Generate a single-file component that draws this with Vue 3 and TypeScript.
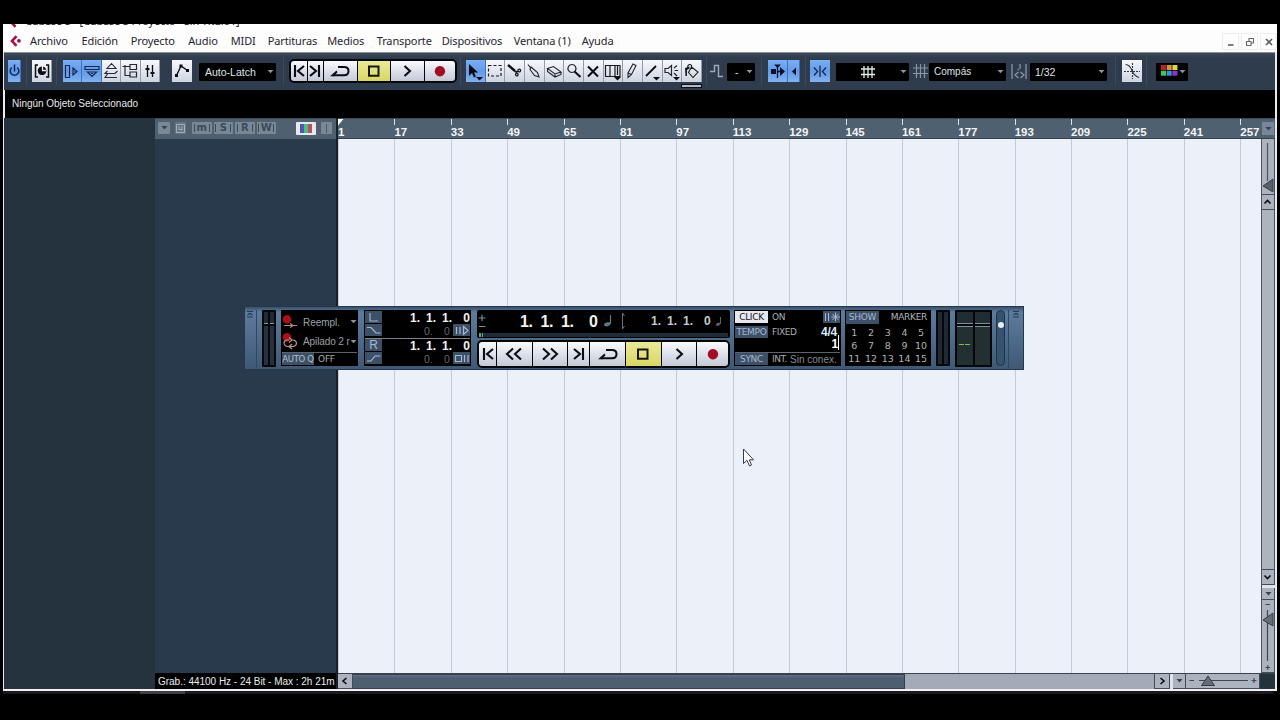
<script setup lang="ts">
import { h } from 'vue'
import type { FunctionalComponent } from 'vue'

interface Shape { d: string; s?: string; f?: string; w?: number; dash?: string }
interface Glyph { w: number; h: number; p: Shape[] }

const K = '#0b0d12'
const glyphs: Record<string, Glyph> = {
  logo: { w: 14, h: 14, p: [{ d: 'M7.500 2.200L3 7L7.500 11.800', s: '#a3153f', w: 2.6 }, { d: 'M10 5a1.900 1.900 0 1 1 -.1 0Z', f: '#a3153f' }] },
  power: { w: 13, h: 22, p: [{ d: 'M4 7.500A4.300 4.300 0 1 0 9 7.500M6.500 4.500V11.500', s: '#0d2b5a', w: 1.5 }] },
  clock: { w: 20, h: 22, p: [{ d: 'M6 5H3.500V17H6M14 5H16.500V17H14', s: K, w: 1.5 }, { d: 'M10 6.500a4.300 4.300 0 1 0 .1 0Z', f: K }, { d: 'M10.500 6V10.500H14', s: '#e8ebf3', w: 1.3 }] },
  inspector: { w: 20, h: 22, p: [{ d: 'M3.500 5.500H7.500V17.500H3.500ZM11 8L15 11.500L11 15ZM12.500 11.500H13.500', s: '#14294d', w: 1.2 }] },
  infoline: { w: 20, h: 22, p: [{ d: 'M3 6.500H17V9.500H3ZM5.500 12H14.500L10 16.500ZM9 13.500H11', s: '#14294d', w: 1.2 }] },
  overview: { w: 20, h: 22, p: [{ d: 'M10.500 3.500L6 8.500H15ZM6.500 11L4 13.500H14L16.500 11M6.500 14L4 17.500H16', s: '#262930', w: 1.1 }] },
  tree: { w: 20, h: 22, p: [{ d: 'M2.500 6.500H8M5 5V15.500H10M8 6.500H10M10 4.500H16.500V9.500H10ZM10 12H16.500V17H10Z', s: '#262930', w: 1.2 }] },
  mixer: { w: 20, h: 22, p: [{ d: 'M7.500 5V17M12.500 5V17', s: K, w: 1.3 }, { d: 'M5.500 8H9.500V10H5.500ZM10.500 12H14.500V14H10.500Z', f: K }] },
  automation: { w: 20, h: 22, p: [{ d: 'M4.500 15.500L9 6L15.500 10.500', s: K, w: 1.4 }, { d: 'M3 14H6V17H3ZM7.500 4.500H10.500V7.500H7.500ZM14 9H17V12H14Z', f: K }] },
  toStart: { w: 16, h: 22, p: [{ d: 'M4 5V17M13 6L7 11L13 16', s: K, w: 2.1 }] },
  toEnd: { w: 16, h: 22, p: [{ d: 'M12 5V17M3 6L9 11L3 16', s: K, w: 2.1 }] },
  rewind: { w: 22, h: 18, p: [{ d: 'M10 3.500L4 9L10 14.500M18 3.500L12 9L18 14.500', s: K, w: 2.1 }] },
  forward: { w: 22, h: 18, p: [{ d: 'M4 3.500L10 9L4 14.500M12 3.500L18 9L12 14.500', s: K, w: 2.1 }] },
  cycle: { w: 22, h: 16, p: [{ d: 'M9 4H15Q19.500 4 19.500 8Q19.500 12.300 15 12.300H4', s: K, w: 2 }, { d: 'M1 13.300L7.500 7.500L8.500 9.200L5.500 12.500V13.300Z', f: K }] },
  stop: { w: 16, h: 16, p: [{ d: 'M3 3.500H12.500V12.800H3Z', s: '#17180b', w: 2 }] },
  play: { w: 16, h: 16, p: [{ d: 'M5.500 3L11 8L5.500 13', s: K, w: 2.1 }] },
  record: { w: 16, h: 16, p: [{ d: 'M8 3a5.200 5.200 0 1 1 -.1 0Z', f: '#a20d25' }] },
  arrow: { w: 20, h: 22, p: [{ d: 'M4 4V16L7 13L9 17.500L11 16.500L9 12.500H13Z', f: K }, { d: 'M11 17H18L14.500 20.500Z', f: K }] },
  range: { w: 20, h: 22, p: [{ d: 'M3.500 5.500H16V16H3.500Z', s: '#17191e', w: 1.2, dash: '3 2' }] },
  split: { w: 20, h: 22, p: [{ d: 'M3 5L10 11', s: K, w: 2.4 }, { d: 'M9.500 11.500H13M10.500 11L11.500 13M13 10.500a1.300 1.300 0 1 0 2.600 0a1.300 1.300 0 1 0 -2.600 0M10.500 14.500a1.300 1.300 0 1 0 2.600 0a1.300 1.300 0 1 0 -2.600 0', s: '#17191e', w: 1.3 }] },
  glue: { w: 20, h: 22, p: [{ d: 'M4 4.500L7 8.500M7 7L13.500 12.500L15 17L10.500 15.500L6 9.500Z', s: '#22252c', w: 1.1 }] },
  erase: { w: 20, h: 22, p: [{ d: 'M3.500 8.500L9.500 6.500L17 12L11 14ZM3.500 8.500V11.500L11 17L17 14.500V12M11 14V17', s: '#22252c', w: 1.1 }] },
  zoom: { w: 20, h: 22, p: [{ d: 'M8 4.500a4 4 0 1 1 -.1 0Z', s: '#22252c', w: 1.2 }, { d: 'M10.500 11.500L16.500 17', s: K, w: 2 }] },
  mute: { w: 20, h: 22, p: [{ d: 'M5 6.500L15 16.500M15 6.500L5 16.500', s: K, w: 2.1 }] },
  warp: { w: 20, h: 22, p: [{ d: 'M2.500 5.500H17V16.500H2.500ZM7 5.500V16.500M12 5.500V16.500M14.500 5.500V15', s: '#17191e', w: 1.2 }, { d: 'M11 17H18L14.500 20.500Z', f: K }] },
  draw: { w: 20, h: 22, p: [{ d: 'M10 4L13 5.500L8.500 14.500L5 17.500L5 13ZM5 13L8.500 14.500', s: '#22252c', w: 1.1 }] },
  line: { w: 20, h: 22, p: [{ d: 'M4 16L14 6', s: K, w: 1.8 }, { d: 'M11 17H18L14.500 20.500Z', f: K }] },
  speaker: { w: 20, h: 22, p: [{ d: 'M3 8.500H6L9.500 5.500V15.500L6 12.500H3ZM12 8L15 5.500M12.500 10.500H16M12 13L15 16', s: '#22252c', w: 1.2 }, { d: 'M11 17H18L14.500 20.500Z', f: K }] },
  bucket: { w: 20, h: 22, p: [{ d: 'M9.500 7L16 12L11 17.500L6.500 12.500ZM9.500 9V5.500Q8 3.500 6 5.500L5.500 8', s: '#17191e', w: 1.1 }, { d: 'M3 8L7.500 6.500V8.500L5 10V16H3.500Z', f: '#17191e' }] },
  pulse: { w: 14, h: 16, p: [{ d: 'M0 8.500H4.500V2.500H8.500V13.500H13', s: '#9caabb', w: 1.4 }] },
  scroll: { w: 19, h: 22, p: [{ d: 'M3 9H8V14H3ZM12 7L17 11.500L12 16ZM6 4.500H13L9.500 8Z', f: '#07122a' }, { d: 'M9.500 5V18M9 11.500H14', s: '#07122a', w: 1.3 }] },
  tinyLeft: { w: 11, h: 22, p: [{ d: 'M8 7.500V15.500L4 11.500Z', f: '#07122a' }] },
  snap: { w: 20, h: 22, p: [{ d: 'M10 5.500V17M4 7.500L7.500 11.500L4 15.500M16 7.500L12.500 11.500L16 15.500', s: '#14294d', w: 1.3 }] },
  grid: { w: 14, h: 14, p: [{ d: 'M3 1V13M7 1V13M11 1V13M0 4H14M0 9.500H14', s: '#dfe9e8', w: 1.3 }] },
  gridDim: { w: 15, h: 16, p: [{ d: 'M3.500 1V15M7.500 1V15M11.500 1V15M0 5H15M0 10.500H15', s: '#8796a5', w: 1.2 }] },
  quant: { w: 16, h: 17, p: [{ d: 'M1 1V16M15 1V16M9 1V6M8 6.500H6.500M7.500 9L4 12L7.500 15M9.500 9L13 12L9.500 15', s: '#8796a5', w: 1.3 }] },
  cross: { w: 20, h: 22, p: [{ d: 'M3.500 4.500Q8 5 10 10.500T17 17.500', s: '#333740', w: 1.2 }, { d: 'M10.500 3V19M2 11.500H18', s: '#333740', w: 1.1, dash: '2 1' }] },
  caret: { w: 7, h: 4, p: [{ d: 'M.5 0H6.500L3.500 3.300Z', f: '#8d939b' }] },
  minimize: { w: 16, h: 16, p: [{ d: 'M5 11H10.500', s: '#66666c', w: 1.7 }] },
  restore: { w: 16, h: 16, p: [{ d: 'M4.500 7.500H9V11.500H4.500ZM7 7V4.500H11.500V9H9.500', s: '#66666c', w: 1.1 }] },
  close: { w: 16, h: 16, p: [{ d: 'M5 5L11 11M11 5L5 11', s: '#5c5c62', w: 1.7 }] },
  chevL: { w: 14, h: 14, p: [{ d: 'M8.500 4L5 7L8.500 10', s: K, w: 1.6 }] },
  chevR: { w: 14, h: 14, p: [{ d: 'M5.500 4L9 7L5.500 10', s: K, w: 1.6 }] },
  chevU: { w: 14, h: 14, p: [{ d: 'M3.500 8.500L6.500 5.500L9.500 8.500', s: K, w: 1.6 }] },
  chevD: { w: 14, h: 14, p: [{ d: 'M3.500 5.500L6.500 8.500L9.500 5.500', s: K, w: 1.6 }] },
  caretDark: { w: 7, h: 4, p: [{ d: 'M.5 0H6.500L3.500 3.500Z', f: '#38414d' }] },
  topSlider: { w: 14, h: 55, p: [{ d: 'M6.500 4V42', s: '#4c5663', w: 1.2 }, { d: 'M12 40V53L2 47Z', f: '#59606a', s: '#363d47', w: 1 }] },
  vSlider: { w: 14, h: 73, p: [{ d: 'M4.500 4.500H9M6.500 10V61M4.500 67.500H9M6.750 65.200V69.800', s: '#3f4752', w: 1.2 }, { d: 'M12 13V26L2 20Z', f: '#666d77', s: '#363d47', w: 1 }] },
  hSlider: { w: 74, h: 14, p: [{ d: 'M3.500 6.500H8M13 6.500H62M65.500 6.500H70.500M68 4V9', s: '#3f4752', w: 1.2 }, { d: 'M15.500 11.500L22 2L28.500 11.500Z', f: '#666d77', s: '#363d47', w: 1 }] },
  box: { w: 11, h: 11, p: [{ d: 'M1.500 1.500H9.500V9.500H1.500ZM4 3.500V6.500H7M7 3.500V7.500', s: '#a3b0bc', w: 1 }] },
  grip: { w: 8, h: 8, p: [{ d: 'M1 1.500H7M1.500 5L4 3.500L6.500 5M1 7H7', s: '#233a52', w: 1.2 }] },
  recA: { w: 18, h: 16, p: [{ d: 'M5 1a4.300 4.300 0 1 1 -.1 0Z', f: '#a80f1c' }, { d: 'M2 11.500H15M8 9.500L11 11.500L8 13.500', s: '#b78684', w: 1.2 }] },
  recB: { w: 18, h: 18, p: [{ d: 'M5 0a4.300 4.300 0 1 1 -.1 0Z', f: '#a80f1c' }, { d: 'M7 7H5Q2 7.500 2 10Q2.500 13.500 5.500 13.500H11Q14.500 13 14.500 10Q14 7 11 7H9M7 4.500L10 7L7 9.500M10 11L7 13.500L10 16', s: '#c99090', w: 1.2 }] },
  locL: { w: 17, h: 12, p: [{ d: 'M5 2V10H13', s: '#9bb1cd', w: 1.2 }] },
  punchIn: { w: 17, h: 12, p: [{ d: 'M2 3.500H6L11 9H15.500', s: '#a6bad3', w: 1.2 }] },
  punchOut: { w: 17, h: 12, p: [{ d: 'M2 9H6L10 4H15.500', s: '#a6bad3', w: 1.2 }] },
  preroll: { w: 18, h: 12, p: [{ d: 'M3.500 3V10M7 3V10M10.500 2.500L15 6.500L10.500 10.500Z', s: '#a6bad3', w: 1.2 }] },
  postroll: { w: 18, h: 12, p: [{ d: 'M2.500 3.500H8.500V9.500H2.500ZM11.500 3V10M15 3V10', s: '#a6bad3', w: 1.2 }] },
  plusMinus: { w: 10, h: 15, p: [{ d: 'M5 1V7M1.500 4H8.500M2 12.500H8.500', s: '#76919a', w: 1.2 }] },
  note: { w: 9, h: 12, p: [{ d: 'M7.500 0V9', s: '#617b80', w: 1.2 }, { d: 'M1 9Q3 6.500 7.500 7.500V9Q6 11.500 3 11.500Q1 11.500 1 9Z', f: '#617b80' }] },
  noteS: { w: 7, h: 9, p: [{ d: 'M5.500 0V7', s: '#5a6770', w: 1 }, { d: 'M1 7Q2.500 5 5.500 6V7Q4 9 2 9Q1 9 1 7Z', f: '#5a6770' }] },
  swap: { w: 4, h: 18, p: [{ d: 'M1.500 1V17M1.500 1L3.500 4M3.500 14L1.500 17', s: '#697079', w: 1 }] },
  countIn: { w: 18, h: 12, p: [{ d: 'M2.500 2V10M5.500 2V10M12.500 1.500V10.500M8.500 6H17M9.500 3L15.500 9M15.500 3L9.500 9', s: '#a6bad3', w: 1 }] },
  marker: { w: 6, h: 7, p: [{ d: 'M0 0H5.500L0 6.500Z', f: '#fff' }] },
  pointer: { w: 13, h: 20, p: [{ d: 'M1.500 1V15.500L5 12.300L7.500 18L9.500 17L7.300 11.800H11.500Z', f: '#fff', s: '#3a3b42', w: 1 }] },
}

const Icon: FunctionalComponent<{ n: string }> = (props) => {
  const g = glyphs[props.n]
  return h('svg', { width: g.w, height: g.h, viewBox: `0 0 ${g.w} ${g.h}`, class: 'ic' },
    g.p.map((s) => h('path', { d: s.d, fill: s.f ?? 'none', stroke: s.s ?? 'none', 'stroke-width': s.w ?? 1, 'stroke-dasharray': s.dash })))
}
Icon.props = ['n']

const menus = ['Archivo', 'Edición', 'Proyecto', 'Audio', 'MIDI', 'Partituras', 'Medios', 'Transporte', 'Dispositivos', 'Ventana (1)', 'Ayuda']
const views = ['inspector', 'infoline', 'overview', 'tree', 'mixer']
const tools = ['arrow', 'range', 'split', 'glue', 'erase', 'zoom', 'mute', 'warp', 'draw', 'line', 'speaker', 'bucket']
const miniTransport = ['toStart', 'toEnd', 'cycle', 'stop', 'play', 'record']
const transport = ['toStart', 'rewind', 'forward', 'toEnd', 'cycle', 'stop', 'play', 'record']
const bars = Array.from({ length: 17 }, (_, i) => i * 16 + 1)
const swatches = ['#b92228', '#d8953a', '#ddd64a', '#3fc45f', '#3293d6', '#9134c4']
const monitors = ['m', 'S', 'R', 'W']
</script>

<template>
  <div class="screen">
    <div class="window">
      <div class="title"><Icon n="logo" /><span>Cubase 5 - [Cubase 5 Proyecto - Sin Título1]</span></div>
      <div class="menubar">
        <Icon n="logo" class="logo" />
        <div class="menus"><span v-for="m in menus" :key="m">{{ m }}</span></div>
        <div class="winbtns"><i><Icon n="minimize" /></i><i><Icon n="restore" /></i><i><Icon n="close" /></i></div>
      </div>

      <div class="toolbar">
        <b class="btn on power"><Icon n="power" /></b>
        <u class="sep s1"></u>
        <b class="btn clock"><Icon n="clock" /></b>
        <u class="sep s2"></u>
        <div class="group views"><b v-for="(v, i) in views" :key="v" class="btn" :class="{ on: i < 2 }"><Icon :n="v" /></b></div>
        <b class="btn auto"><Icon n="automation" /></b>
        <div class="drop latch"><span>Auto-Latch</span><Icon n="caret" /></div>
        <u class="sep s3"></u>
        <div class="mini"><b v-for="m in miniTransport" :key="m" :class="m"><Icon :n="m" /></b></div>
        <u class="sep s4"></u>
        <div class="toolwrap">
          <div class="group tools"><b v-for="(t, i) in tools" :key="t" class="btn" :class="{ on: i === 0 }"><Icon :n="t" /></b></div>
          <div class="colorbar"></div>
        </div>
        <u class="sep s5"></u>
        <Icon n="pulse" class="pulse" />
        <div class="drop nudge"><span>-</span><Icon n="caret" /></div>
        <u class="sep s6"></u>
        <div class="group follow"><b class="btn on"><Icon n="scroll" /></b><b class="btn on"><Icon n="tinyLeft" /></b></div>
        <u class="sep s7"></u>
        <b class="btn on snap"><Icon n="snap" /></b>
        <div class="drop gridtype"><Icon n="grid" /><Icon n="caret" /></div>
        <Icon n="gridDim" class="gdim" />
        <div class="drop compas"><span>Compás</span><Icon n="caret" /></div>
        <Icon n="quant" class="quant" />
        <div class="drop qval"><span>1/32</span><Icon n="caret" /></div>
        <u class="sep s8"></u>
        <b class="btn crossbtn"><Icon n="cross" /></b>
        <u class="sep s9"></u>
        <div class="drop colors"><div class="sw"><svg width="17" height="11" viewBox="0 0 17 11"><rect v-for="(c, i) in swatches" :key="c" :x="(i % 3) * 5.700" :y="i < 3 ? 0 : 5.700" width="5" height="5" :fill="c" /></svg></div><Icon n="caret" /></div>
      </div>

      <div class="info">Ningún Objeto Seleccionado</div>

      <div class="project">
        <div class="inspector"></div>
        <div class="tracks">
          <div class="trackhead">
            <i class="tb dd"><Icon n="caretDark" /></i>
            <i class="tb bx"><Icon n="box" /></i>
            <i v-for="m in monitors" :key="m" class="tb mon"><span>{{ m }}</span></i>
            <i class="tb rgb"><em></em><em></em><em></em></i>
            <i class="tb bar"><em></em></i>
          </div>
          <div class="tracklist"></div>
          <div class="status">Grab.: 44100 Hz - 24 Bit - Max : 2h 21m</div>
        </div>
        <div class="arrange">
          <div class="ruler">
            <div class="ticks"><span v-for="b in bars" :key="b">{{ b }}</span></div>
            <Icon n="marker" class="marker" />
            <i class="rulerbtn"><Icon n="caretDark" /></i>
          </div>
          <div class="middle">
            <div class="canvas"><i v-for="b in bars" :key="b"></i></div>
            <div class="vscroll">
              <div class="cell topz"><Icon n="topSlider" /></div>
              <div class="cell"><Icon n="chevU" /></div>
              <div class="vtrack"></div>
              <div class="cell"><Icon n="chevD" /></div>
              <div class="gap"></div>
              <div class="cell small"><Icon n="caretDark" /></div>
              <div class="cell botz"><Icon n="vSlider" /></div>
            </div>
          </div>
          <div class="hscroll">
            <div class="cell"><Icon n="chevL" /></div>
            <div class="thumb"></div>
            <div class="htrack"></div>
            <div class="cell"><Icon n="chevR" /></div>
            <div class="gap"></div>
            <div class="cell small"><Icon n="caretDark" /></div>
            <div class="cell hz"><Icon n="hSlider" /></div>
            <div class="corner"></div>
          </div>
        </div>
      </div>
    </div>
    <div class="below"><i></i></div>

    <div class="panel">
      <div class="cap"><Icon n="grip" /></div>
      <div class="meter thin cross1"><i></i><i></i></div>
      <div class="modes">
        <div class="mode m1"><Icon n="recA" /><span>Reempl.</span><Icon n="caret" /></div>
        <div class="mode m2"><Icon n="recB" /><span>Apilado 2 r</span><Icon n="caret" /></div>
        <div class="autoq"><b>AUTO Q</b><span>OFF</span></div>
      </div>
      <div class="locs">
        <div class="lrow"><i class="key"><Icon n="locL" /></i><div class="num"><span>1.</span><span>1.</span><span>1.</span><span>0</span></div></div>
        <div class="lrow dim"><i class="key"><Icon n="punchIn" /></i><div class="num2"><span>0.</span><span>0</span></div><i class="key"><Icon n="preroll" /></i></div>
        <div class="rule"></div>
        <div class="lrow"><i class="key r">R</i><div class="num"><span>1.</span><span>1.</span><span>1.</span><span>0</span></div></div>
        <div class="lrow dim"><i class="key"><Icon n="punchOut" /></i><div class="num2"><span>0.</span><span>0</span></div><i class="key"><Icon n="postroll" /></i></div>
      </div>
      <div class="main">
        <div class="display">
          <div class="pos">
            <Icon n="plusMinus" class="pm" />
            <div class="big"><span>1.</span><span>1.</span><span>1.</span><span>0</span></div>
            <Icon n="note" />
            <Icon n="swap" class="swap" />
            <div class="sec"><span>1.</span><span>1.</span><span>1.</span><span>0</span></div>
            <Icon n="noteS" />
          </div>
          <div class="progress"><i></i><i></i></div>
        </div>
        <div class="keys"><b v-for="t in transport" :key="t" :class="t"><Icon :n="t" /></b></div>
      </div>
      <div class="click">
        <div class="crow"><b class="lit">CLICK</b><span>ON</span><i class="key"><Icon n="countIn" /></i></div>
        <div class="crow tempo"><b>TEMPO</b><span>FIXED</span><strong>4/4</strong></div>
        <div class="bpm"><strong>1</strong><i></i></div>
        <div class="crow sync"><b>SYNC</b><span>INT.</span><em>Sin conex.</em></div>
      </div>
      <div class="markers">
        <div class="mhead"><b>SHOW</b><span>MARKER</span></div>
        <div class="mgrid"><span v-for="n in 15" :key="n">{{ n }}</span></div>
      </div>
      <div class="meter thin m3"><i></i><i></i></div>
      <div class="meter wide"><i><em></em><em></em></i><i></i></div>
      <div class="fader"><i></i></div>
      <div class="cap right"><Icon n="grip" /></div>
    </div>
    <Icon n="pointer" class="pointer" />
  </div>
</template>

<style>
html, body { margin: 0; background: #000; overflow: hidden; }
.ic { display: block; flex: none; }
</style>
<style scoped>
* { box-sizing: border-box; }
i, u, em { font-style: normal; text-decoration: none; display: block; }
b, strong { display: block; }
.screen { position: relative; width: 1280px; height: 720px; background: #000; padding: 24px 3px 0; overflow: hidden; font-family: "Liberation Sans", Arial, sans-serif; color: #e9edf0; }
.window { height: 667px; width: 1274px; background: #e9e9ef; display: flex; flex-direction: column; border-bottom: 2px solid #f3eff2; overflow: hidden; }
.title { height: 5px; flex: none; overflow: hidden; background: #fff; display: flex; align-items: flex-end; font: 11px/14px "Noto Sans", "Open Sans", sans-serif; color: #222; padding-left: 5px; }
.title span { margin: 0 0 1px 3px; letter-spacing: -.18px; white-space: nowrap; }
.menubar { height: 23px; flex: none; display: flex; align-items: center; background: #fefdfe; }
.logo { margin: 1px 0 0 6px; }
.menus { display: grid; grid-template-columns: 51.500px 49.200px 57.500px 42.500px 37px 59.500px 49.500px 65px 72px 68px 40px; margin-left: 7px; margin-top: 1px; font: 11px/20px "Noto Sans", "Open Sans", sans-serif; color: #26252b; letter-spacing: -.12px; white-space: nowrap; }
.winbtns { margin-left: auto; display: flex; gap: 2px; margin-right: 0; margin-top: 2px; }
.winbtns i { width: 17px; height: 17px; border: 1px solid #eeecef; display: flex; align-items: center; justify-content: center; }
.toolbar { height: 38px; flex: none; display: flex; align-items: flex-start; background: linear-gradient(#3a4858, #2e3c4d 5px, #2e3c4d); border-top: 1px solid #8b8f9b; padding: 7px 0 0 5px; margin: 0 2px 0 1px; }
.btn { height: 22px; background: linear-gradient(#f7f8fd, #ced4e0); display: flex; align-items: center; justify-content: center; overflow: hidden; border-right: 1px solid #929cab; }
.btn.on { background: linear-gradient(#79aff5, #659ae8 50%, #80b1f1); border-color: #4172b8; }
.power { width: 13px; margin-left: -1px; }
.sep { width: 1px; height: 28px; margin-top: -3px; background: #3c4a5b; flex: none; }
.s1 { margin-left: 5px; } .clock { width: 20px; margin-left: 5px; }
.s2 { margin-left: 4px; }
.group { display: flex; }
.views { width: 97px; margin-left: 6px; } .views .btn { flex: 1; }
.auto { width: 20px; margin-left: 12px; border: 0; }
.drop { height: 18px; margin-top: 3px; background: #000; border-radius: 1px; display: flex; align-items: center; justify-content: space-between; font-size: 10.500px; color: #dfe4e8; padding: 0 2px 0 5px; flex: none; line-height: 16px; }
.drop span { margin-top: -1px; }
.latch { width: 77px; margin-left: 7px; padding-left: 6px; }
.s3 { margin-left: 7px; }
.mini { width: 168px; height: 24px; margin: -1px 0 0 5px; border: 2px solid #05070a; border-radius: 5px; display: flex; background: #05070a; gap: 1px; overflow: hidden; flex: none; }
.mini b, .keys b { background: linear-gradient(#fafbfe, #d9dce8 60%, #c5c9d6); display: flex; align-items: center; justify-content: center; overflow: hidden; }
.mini .stop, .keys .stop { background: linear-gradient(#ebea97, #d8d666); }
.mini b { width: 32.500px; } .mini .toStart, .mini .toEnd { width: 15.500px; }
.mini .record { flex: 1; }
.s4 { margin-left: 3px; }
.toolwrap { width: 236px; margin-left: 5px; flex: none; }
.tools .btn { width: 19.670px; flex: none; }
.colorbar { width: 21px; height: 4px; margin: 2px 0 0 auto; background: #b5b9c4; border: 1px solid #0b0e14; }
.s5 { margin-left: 4px; }
.pulse { margin: 3px 0 0 3px; }
.nudge { width: 28px; margin-left: 3px; padding-left: 8px; }
.s6 { margin-left: 6px; }
.follow { margin-left: 6px; }
.follow .btn { width: 20px; } .follow .btn + .btn { width: 12px; }
.s7 { margin-left: 5px; }
.snap { width: 20px; margin-left: 4px; border: 0; }
.gridtype { width: 73px; margin-left: 6px; padding-left: 25px; }
.gdim { margin: 3px 0 0 4px; }
.compas { width: 77px; margin-left: 1px; font-size: 10px; }
.quant { margin: 3px 0 0 5px; }
.qval { width: 77px; margin-left: 3px; }
.s8 { margin-left: 8px; }
.crossbtn { width: 20px; margin-left: 6px; border: 0; }
.s9 { margin-left: 4px; }
.colors { width: 32px; margin-left: 9px; padding: 0 2px 0 5px; }
.info { height: 28px; flex: none; background: #000; margin: 0 2px 0 2px; padding-left: 7px; font-size: 10px; line-height: 28px; color: #e6e8ea; letter-spacing: -.03px; }
.project { flex: 1; min-height: 0; display: flex; background: #24333e; margin: 0 2px 0 1px; }
.inspector { width: 151px; background: #24333e; flex: none; }
.tracks { width: 183px; flex: none; display: flex; flex-direction: column; background: #283a4b; border-right: 2px solid #17212c; }
.trackhead { height: 21px; background: #4f6070; display: flex; align-items: center; padding: 0 3px 2px 3px; border-top: 1px solid #3b4a58; }
.tb { height: 12px; background: #798897; border-radius: 1px; display: flex; align-items: center; justify-content: center; flex: none; }
.dd { width: 12px; } .bx { width: 11px; margin-left: 5px; background: #667585; }
.mon { width: 19.500px; margin-left: 2px; color: #394a5b; font: bold 10px/10px "DejaVu Sans", sans-serif; }
.mon span { border: solid #394a5b; border-width: 0 1px; width: 16px; height: 8px; line-height: 7px; text-align: center; }
.bx + .mon { margin-left: 6px; }
.rgb { width: 20px; background: #e7e9f0; margin-left: 20px; height: 13px; }
.rgb em { width: 4px; height: 9px; background: #4f55bd; } .rgb em + em { background: #4cc07a; } .rgb em + em + em { background: #b4545d; }
.bar { width: 11px; margin-left: 5px; } .bar em { width: 1px; height: 9px; background: #4c5b6a; }
.tracklist { flex: 1; }
.status { height: 16px; background: #000; font-size: 10px; line-height: 17px; padding-left: 3px; color: #e9ebec; white-space: nowrap; letter-spacing: -.02px; overflow: hidden; }
.arrange { flex: 1; min-width: 0; display: flex; flex-direction: column; }
.ruler { height: 21px; flex: none; position: relative; background: #4f6070; border-bottom: 1px solid #34424f; overflow: hidden; border-top: 1px solid #3b4a58; }
.ticks { display: grid; grid-template-columns: repeat(17, 56.400px); }
.ticks span { font-size: 11.500px; font-weight: bold; line-height: 12px; height: 20px; padding-top: 7px; color: #f3f5f6; background: linear-gradient(#dfe4e8, #dfe4e8) left top / 1px 6px no-repeat; }
.marker { position: absolute; left: 0; top: 0; }
.rulerbtn { position: absolute; right: 1px; top: 3px; width: 12px; height: 13px; background: #76879a; display: flex; align-items: center; justify-content: center; }
.middle { flex: 1; min-height: 0; display: flex; }
.canvas { width: 923px; background: #ecf0f9; display: grid; grid-template-columns: repeat(17, 56.400px); overflow: hidden; flex: none; }
.canvas i { border-left: 1px solid #c4cad4; }
.vscroll { flex: 1; display: flex; flex-direction: column; border-left: 1px solid #4a5360; background: #dfe3eb; min-width: 0; }
.cell { background: #acb3bf; border: 1px solid #424c59; border-width: 0 1px 1px 0; display: flex; align-items: center; justify-content: center; overflow: hidden; height: 15px; flex: none; }
.vscroll .cell { width: 100%; }
.vscroll .topz { height: 56px; }
.vtrack { flex: 1; background: #aeb4be; border-right: 1px solid #4a5360; border-bottom: 1px solid #424c59; }
.vscroll .gap { height: 3px; }
.vscroll .small { height: 12px; }
.vscroll .botz { height: 73px; }
.hscroll { height: 16px; flex: none; display: flex; border-top: 1px solid #39434f; background: #dfe3eb; }
.hscroll .cell { width: 15px; height: 15px; border-width: 0 1px 1px 0; }
.thumb { width: 552px; background: linear-gradient(#60718a, #4d5e70 3px, #4d5e70); border: 1px solid #323f4e; border-left: 0; flex: none; }
.htrack { width: 250px; background: #a3abb8; border-right: 1px solid #424c59; flex: none; }
.hscroll .gap { width: 3px; flex: none; }
.hscroll .small { width: 13px; }
.hscroll .hz { width: 74px; }
.corner { flex: 1; background: #24323e; }
.below { height: 3px; background: #1a191b; padding-left: 137px; width: 1270px; }
.below i { width: 45px; height: 3px; background: #403f41; }

.panel { position: absolute; left: 244px; top: 306px; width: 780px; height: 64px; background: linear-gradient(#39506a, #5d7b9c 5px, #4f6c8b 50%, #3f5975); border: 1px solid #25374a; display: flex; padding: 3px 0 0; }
.cap { width: 12px; height: 58px; border-right: 1px solid #304760; padding: 0 0 0 1px; flex: none; }
.meter { height: 57px; background: #05070b; display: flex; gap: 2px; padding: 2px; border-radius: 1px; flex: none; }
.thin { width: 14px; margin-left: 5px; } .meter i { flex: 1; background: #202a35; }
.thin.cross1 i { background: linear-gradient(#202a35 0 11px, #8d99a4 11px 12px, #05070b 12px 14px, #27323f 14px); }
.modes { width: 77px; height: 56px; margin-left: 5px; background: #000; flex: none; padding: 1px; }
.mode { display: flex; align-items: center; font-size: 10px; color: #9ba0a6; height: 19px; }
.mode span { width: 49.500px; margin-left: 3px; white-space: nowrap; letter-spacing: -.05px; }
.mode .ic:first-child { margin-left: 0; }
.m1 { margin-top: 1px; height: 20px; }
.m2 span { letter-spacing: -.1px; }
.autoq { display: flex; margin-top: 1px; border-top: 1px solid #5b646d; height: 13px; font: 9px/12px "DejaVu Sans", sans-serif; color: #a8acb0; }
.autoq b { width: 32px; background: #3d5068; color: #b4c0cf; font-weight: normal; text-align: center; font-size: 8.500px; letter-spacing: -.3px; white-space: nowrap; height: 12px; line-height: 12px; }
.autoq span { margin-left: 4px; line-height: 13px; letter-spacing: -.2px; }
.locs { width: 107px; height: 56px; margin-left: 6px; background: #000; flex: none; padding: 1px; }
.lrow { display: flex; height: 13px; justify-content: space-between; }
.key { width: 17px; height: 12px; background: #3d5068; color: #a6bad3; display: flex; align-items: center; justify-content: center; font-size: 12px; line-height: 12px; flex: none; }
.num { display: grid; grid-template-columns: 16px 16px 16px 12px; font-size: 12px; font-weight: bold; color: #f1f1f3; line-height: 14px; }
.num span:last-child { text-align: right; }
.dim { font-size: 10.500px; color: #62656b; line-height: 14px; }
.num2 { display: grid; grid-template-columns: 20px 6px; margin-left: auto; margin-right: 3px; }
.rule { height: 1px; background: #7b8289; margin: 1px 0 0; }
.main { width: 253px; margin-left: 6px; flex: none; }
.display { height: 28px; background: #000; border-radius: 2px; }
.pos { display: flex; height: 22px; align-items: center; }
.pm { margin-left: 0; margin-top: 1px; }
.big { display: grid; grid-template-columns: 20.500px 20.500px 28px 10px; margin-left: 33px; font-size: 16px; font-weight: bold; color: #f2f2ef; line-height: 23px; width: 83px; letter-spacing: -.5px; }
.swap { margin-left: 9px; }
.sec { display: grid; grid-template-columns: 16px 16px 21px 11px; margin-left: 26px; font-size: 12px; font-weight: bold; color: #c5c9d2; line-height: 23px; width: 64px; }
.progress { margin: 1px 2px 0; height: 4px; background: #202b38; display: flex; gap: 1px; }
.progress i { width: 1.500px; height: 4px; background: #61a56c; }
.keys { height: 28px; margin-top: 2px; border: 2px solid #05070a; border-radius: 5px; background: #05070a; display: flex; gap: 1px; overflow: hidden; }
.keys b { width: 34.700px; }
.keys .toStart { width: 17px; } .keys .toEnd { width: 21px; } .keys .record { flex: 1; }
.click { width: 107px; height: 56px; margin-left: 4px; background: #000; flex: none; padding: 1px; font: 9px/12px "DejaVu Sans", sans-serif; color: #a9adb2; }
.crow { display: flex; height: 12px; }
.crow b, .mhead b { width: 33px; background: #3d5068; color: #a6b8cd; font-weight: normal; text-align: center; letter-spacing: -.3px; line-height: 12px; flex: none; }
.crow b.lit { background: #e6e8f0; color: #14161c; }
.crow span { margin-left: 4px; letter-spacing: -.4px; line-height: 13px; }
.crow .key { margin-left: auto; }
.tempo { margin-top: 3px; }
.click strong { margin-left: auto; font: bold 12px/13px "Liberation Sans", sans-serif; color: #dce9fa; padding-right: 3px; letter-spacing: -.2px; }
.bpm { display: flex; height: 12px; }
.bpm strong { padding: 0; line-height: 12px; color: #fff; }
.bpm i { width: 1px; height: 15px; background: #fff; margin: -3px 1px 0 0; }
.sync { margin-top: 2px; border-top: 1px solid #5b646d; height: 13px; }
.sync em { font: 10px/13px "Liberation Sans", sans-serif; margin-left: 3px; color: #898c91; white-space: nowrap; }
.markers { width: 86px; height: 56px; margin-left: 4px; background: #000; flex: none; padding: 1px 0 0 1px; font: 9px/12px "DejaVu Sans", sans-serif; color: #b1b4b9; }
.mhead { display: flex; justify-content: space-between; padding-right: 4px; letter-spacing: -.3px; line-height: 13px; }
.mgrid { display: grid; grid-template-columns: repeat(5, 16.700px); grid-auto-rows: 13px; text-align: center; margin-top: 3px; font-size: 9.500px; }
.m3 { margin-left: 5px; height: 56px; }
.wide { width: 37px; margin-left: 5px; }
.wide i { background: linear-gradient(#202d33 0 11px, #838e97 11px 12px, #05070b 12px 14px, #838e97 14px 15px, #242f34 15px); display: flex; gap: 1px; padding: 32px 0 0 2px; }
.wide i em { width: 5px; height: 1px; background: #7ebd50; }
.fader { width: 9px; height: 56px; margin-left: 4px; border: 1px solid #1e3348; border-radius: 5px; background: #37526f; flex: none; padding: 11px 0 0 0.500px; }
.fader i { width: 6px; height: 6px; border-radius: 3px; background: #e5edf5; }
.cap.right { border-right: 0; border-left: 1px solid #304760; margin-left: 3px; padding-left: 3px; }
.pointer { position: absolute; left: 742px; top: 448px; }
</style>
